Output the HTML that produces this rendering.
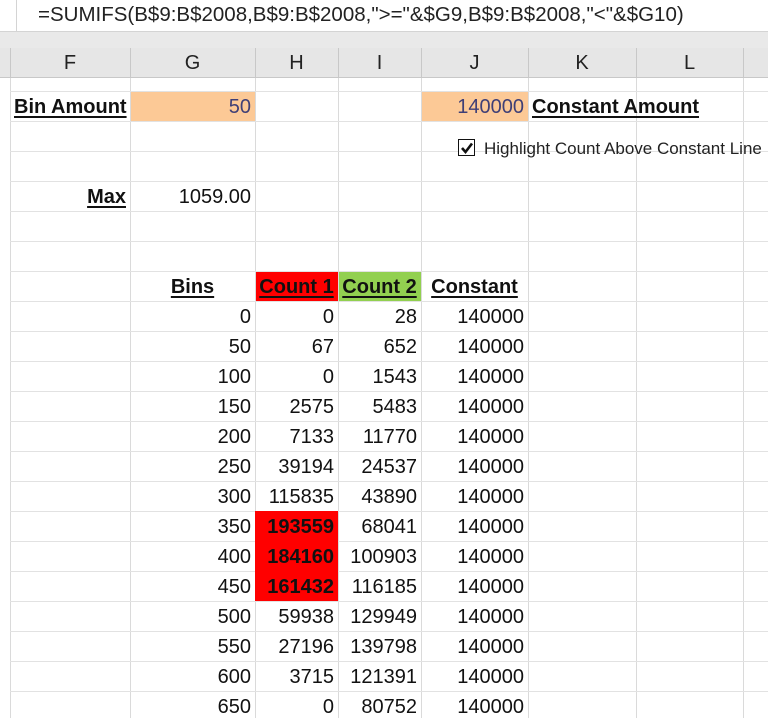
<!DOCTYPE html>
<html><head><meta charset="utf-8"><style>
body{margin:0;width:768px;height:715px;overflow:hidden;background:#fff;font-family:"Liberation Sans",sans-serif;position:relative}
.a{position:absolute}
.fb{left:0;top:0;width:768px;height:31px;background:#fff;border-bottom:1px solid #d4d4d4}
.gap{left:0;top:32px;width:768px;height:16px;background:#e9e9e9}
.hdr{left:0;top:48px;width:768px;height:29px;background:#e6e6e6;border-bottom:1px solid #c8c8c8}
.hl{top:48px;height:29px;width:1px;background:#c8c8c8}
.hc{top:48px;height:29px;line-height:31px;text-align:center;font-size:20px;color:#222}
.vl{top:78px;height:640px;width:1px;background:#dadada}
.rl{left:10px;width:758px;height:1px;background:#e2e2e2}
.c{height:30px;line-height:30px;font-size:20px;color:#111;white-space:nowrap;box-sizing:border-box;padding:0 4px;text-align:right}
.b{font-weight:bold;text-decoration:underline;text-decoration-thickness:2px;text-underline-offset:3px}
.ctr{text-align:center;padding:0}
</style></head><body>
<div class="a fb"></div>
<div class="a" style="left:0;top:0;width:16px;height:31px;border-right:1px solid #d4d4d4"></div>
<div class="a" style="left:38px;top:0;height:31px;line-height:29px;font-size:20.5px;color:#222;white-space:nowrap">=SUMIFS(B$9:B$2008,B$9:B$2008,"&gt;="&amp;$G9,B$9:B$2008,"&lt;"&amp;$G10)</div>
<div class="a gap"></div>
<div class="a hdr"></div>
<div class="a hl" style="left:10px"></div><div class="a hl" style="left:130px"></div><div class="a hl" style="left:255px"></div><div class="a hl" style="left:338px"></div><div class="a hl" style="left:421px"></div><div class="a hl" style="left:528px"></div><div class="a hl" style="left:636px"></div><div class="a hl" style="left:743px"></div>
<div class="a hc" style="left:10px;width:120px">F</div>
<div class="a hc" style="left:130px;width:125px">G</div>
<div class="a hc" style="left:255px;width:83px">H</div>
<div class="a hc" style="left:338px;width:83px">I</div>
<div class="a hc" style="left:421px;width:107px">J</div>
<div class="a hc" style="left:528px;width:108px">K</div>
<div class="a hc" style="left:636px;width:107px">L</div>

<div class="a" style="left:131px;top:92px;width:124px;height:29px;background:#fcc996"></div>
<div class="a" style="left:422px;top:92px;width:106px;height:29px;background:#fcc996"></div>
<div class="a" style="left:255px;top:271px;width:83px;height:30px;background:#ff0000"></div>
<div class="a" style="left:338px;top:271px;width:83px;height:30px;background:#92d050"></div>

<div class="a vl" style="left:10px"></div><div class="a vl" style="left:130px"></div><div class="a vl" style="left:255px"></div><div class="a vl" style="left:338px"></div><div class="a vl" style="left:421px"></div><div class="a vl" style="left:528px"></div><div class="a vl" style="left:636px"></div><div class="a vl" style="left:743px"></div>
<div class="a rl" style="top:91px"></div><div class="a rl" style="top:121px"></div><div class="a rl" style="top:151px"></div><div class="a rl" style="top:181px"></div><div class="a rl" style="top:211px"></div><div class="a rl" style="top:241px"></div><div class="a rl" style="top:271px"></div><div class="a rl" style="top:301px"></div><div class="a rl" style="top:331px"></div><div class="a rl" style="top:361px"></div><div class="a rl" style="top:391px"></div><div class="a rl" style="top:421px"></div><div class="a rl" style="top:451px"></div><div class="a rl" style="top:481px"></div><div class="a rl" style="top:511px"></div><div class="a rl" style="top:541px"></div><div class="a rl" style="top:571px"></div><div class="a rl" style="top:601px"></div><div class="a rl" style="top:631px"></div><div class="a rl" style="top:661px"></div><div class="a rl" style="top:691px"></div>
<div class="a" style="left:255px;top:511px;width:83px;height:90px;background:#ff0000"></div>

<div class="a c b" style="left:10px;top:92px;width:120px">Bin Amount</div>
<div class="a c" style="left:130px;top:92px;width:125px;color:#3f3f76">50</div>
<div class="a c" style="left:421px;top:92px;width:107px;color:#3f3f76">140000</div>
<div class="a c b" style="left:528px;top:92px;width:240px;text-align:left">Constant Amount</div>
<div class="a" style="left:458px;top:139px;width:15px;height:15px;border:1.5px solid #111;background:#fff"></div>
<svg class="a" style="left:458px;top:139px" width="18" height="18" viewBox="0 0 18 18"><path d="M4 9 L7.5 13 L14 4.5" fill="none" stroke="#111" stroke-width="2.6"/></svg>
<div class="a" style="left:484px;top:136px;line-height:26px;font-size:17px;color:#222;white-space:nowrap">Highlight Count Above Constant Line</div>
<div class="a c b" style="left:10px;top:182px;width:120px">Max</div>
<div class="a c" style="left:130px;top:182px;width:125px">1059.00</div>
<div class="a c b ctr" style="left:130px;top:272px;width:125px">Bins</div>
<div class="a c b ctr" style="left:255px;top:272px;width:83px">Count 1</div>
<div class="a c b ctr" style="left:338px;top:272px;width:83px">Count 2</div>
<div class="a c b ctr" style="left:421px;top:272px;width:107px">Constant</div>
<div id="rows"></div>
<script>
var d=[[0,0,28],[50,67,652],[100,0,1543],[150,2575,5483],[200,7133,11770],[250,39194,24537],[300,115835,43890],[350,193559,68041],[400,184160,100903],[450,161432,116185],[500,59938,129949],[550,27196,139798],[600,3715,121391],[650,0,80752]];
var h='';d.forEach(function(r,i){var t=302+30*i;var bold=(i>=7&&i<=9)?'font-weight:bold;':'';
h+='<div class="a c" style="left:130px;top:'+t+'px;width:125px">'+r[0]+'</div>';
h+='<div class="a c" style="left:255px;top:'+t+'px;width:83px;'+bold+'">'+r[1]+'</div>';
h+='<div class="a c" style="left:338px;top:'+t+'px;width:83px">'+r[2]+'</div>';
h+='<div class="a c" style="left:421px;top:'+t+'px;width:107px">140000</div>';});
document.getElementById('rows').innerHTML=h;
</script>
</body></html>
